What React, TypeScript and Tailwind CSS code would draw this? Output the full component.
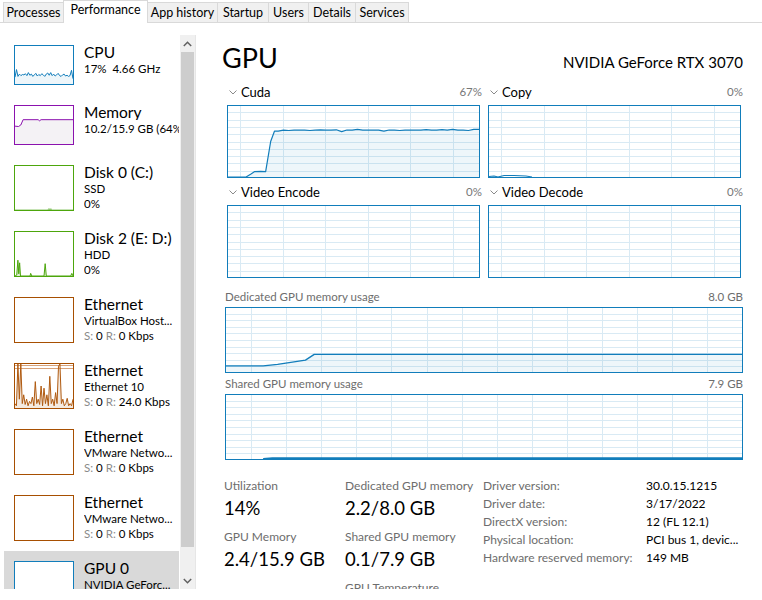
import React from "react";

type Pt = [number, number];

type GraphProps = {
  w: number;
  h: number;
  border: string;
  line?: string;
  fill?: string;
  grid?: string;
  gx?: number;
  gxOff?: number;
  gy?: number;
  pts?: Pt[];
  lw?: number;
  extras?: React.ReactNode;
};

function Graph({ w, h, border, line, fill, grid, gx, gxOff = 0, gy = 10, pts, lw = 1, extras }: GraphProps) {
  const X = (f: number) => 1 + f * (w - 2);
  const Y = (v: number) => h - 1 - v * (h - 2);
  const lines: React.ReactNode[] = [];
  if (grid) {
    for (let i = 1; i < gy; i++) {
      const y = Math.round((h * i) / gy) + 0.5;
      lines.push(<line key={"h" + i} x1={0} x2={w} y1={y} y2={y} stroke={grid} strokeWidth={1} />);
    }
    if (gx) {
      let k = 0;
      for (let x = gxOff; x < w - 1; x += gx) {
        const xx = Math.round(x) + 0.5;
        lines.push(<line key={"v" + k++} x1={xx} x2={xx} y1={0} y2={h} stroke={grid} strokeWidth={1} />);
      }
    }
  }
  const poly = pts ? pts.map(([f, v]) => `${X(f).toFixed(2)},${Y(v).toFixed(2)}`).join(" ") : "";
  const area = pts ? `${X(pts[0][0])},${h - 1} ${poly} ${X(pts[pts.length - 1][0])},${h - 1}` : "";
  return (
    <svg width={w} height={h} className="block shrink-0">
      <rect width={w} height={h} fill="#ffffff" />
      {lines}
      {pts && fill && <polygon points={area} fill={fill} />}
      {extras}
      {pts && line && (
        <polyline points={poly} fill="none" stroke={line} strokeWidth={lw} strokeLinejoin="round" />
      )}
      <rect x={0.5} y={0.5} width={w - 1} height={h - 1} fill="none" stroke={border} strokeWidth={1} />
    </svg>
  );
}

const series = (vals: number[], x0 = 0, x1 = 1): Pt[] =>
  vals.map((v, i) => [x0 + ((x1 - x0) * i) / (vals.length - 1), v] as Pt);

const BLUE = "#117dbb";
const GRID = "#d9eaf4";
const BFILL = "rgba(17,125,187,0.07)";

const cpuPts = series([
  0.18, 0.38, 0.2, 0.26, 0.22, 0.25, 0.24, 0.27, 0.22, 0.3, 0.23, 0.26, 0.2, 0.24, 0.28, 0.21, 0.25, 0.22, 0.27,
  0.24, 0.2, 0.26, 0.29, 0.23, 0.3, 0.22, 0.26, 0.21, 0.24, 0.28, 0.22, 0.2, 0.24, 0.26, 0.21, 0.23, 0.2, 0.22,
  0.36, 0.14,
]);

const memPts: Pt[] = [
  [0, 0.47],
  [0.06, 0.46],
  [0.1, 0.5],
  [0.14, 0.64],
  [0.4, 0.64],
  [0.42, 0.61],
  [0.45, 0.64],
  [1, 0.64],
];

const disk0Pts: Pt[] = [
  [0, 0],
  [0.57, 0],
  [0.58, 0.03],
  [0.59, 0],
  [0.6, 0.03],
  [0.61, 0],
  [0.62, 0.03],
  [0.63, 0],
  [1, 0],
];

const disk2Pts: Pt[] = [
  [0, 0],
  [0.03, 0.02],
  [0.05, 0.36],
  [0.065, 0.05],
  [0.08, 0.3],
  [0.095, 0],
  [0.26, 0],
  [0.27, 0.06],
  [0.29, 0],
  [0.5, 0],
  [0.52, 0.28],
  [0.54, 0],
  [0.96, 0],
  [0.98, 0.06],
  [1, 0],
];

const eth10Pts = series([
  0.1, 0.05, 1, 0.2, 1, 0.1, 0.3, 0.08, 0.2, 0.05, 0.15, 0.1, 0.25, 0.05, 0.6, 0.1, 0.2, 0.08, 0.5, 0.05, 0.45,
  0.1, 0.3, 0.05, 0.72, 0.1, 0.2, 0.05, 0.35, 0.1, 0.95, 1, 0.1, 0.2, 0.05, 0.1, 0.22, 0.05, 0.1, 0.05, 0.2,
]);

const cudaWiggle = [
  0.645, 0.66, 0.655, 0.66, 0.662, 0.66, 0.655, 0.66, 0.665, 0.66, 0.66, 0.665, 0.64, 0.662, 0.66, 0.672, 0.66,
  0.66, 0.662, 0.66, 0.645, 0.662, 0.66, 0.655, 0.66, 0.662, 0.66, 0.66, 0.667, 0.66, 0.66, 0.668, 0.66, 0.672,
  0.66, 0.66, 0.655, 0.672, 0.672,
];
const cudaPts: Pt[] = [
  [0, 0],
  [0.072, 0],
  [0.09, 0.04],
  [0.105, 0.075],
  [0.13, 0.078],
  [0.15, 0.075],
  [0.17, 0.5],
  [0.185, 0.645],
  ...series(cudaWiggle, 0.2, 1),
];

const copyExtras = (
  <polyline
    points="1,71.5 6,71 10,72 16,70.5 26,70.5 38,71 44,72"
    fill="none"
    stroke={BLUE}
    strokeWidth={1.2}
  />
);

const dedPts: Pt[] = [
  [0, 0.095],
  [0.072, 0.095],
  [0.1, 0.12],
  [0.154, 0.186],
  [0.171, 0.276],
  [1, 0.276],
];

const sharedPts: Pt[] = [
  [0.072, 0.0],
  [0.09, 0.012],
  [1, 0.012],
];

function Chevron() {
  return (
    <svg width="8" height="5" className="block shrink-0">
      <polyline points="0.5,0.5 4,4 7.5,0.5" fill="none" stroke="#8a8a8a" strokeWidth={1} />
    </svg>
  );
}

function SR({ s, r }: { s: string; r: string }) {
  return (
    <>
      <span className="text-[#8a8a8a]">S:</span> {s} <span className="text-[#8a8a8a]">R:</span> {r}
    </>
  );
}

type Item = {
  title: string;
  lines: React.ReactNode[];
  h: number;
  border: string;
  line?: string;
  fill?: string;
  pts?: Pt[];
  sel?: boolean;
  extras?: React.ReactNode;
};

const items: Item[] = [
  { title: "CPU", lines: ["17%\u00a0\u00a04.66 GHz"], h: 40, border: BLUE, line: BLUE, fill: BFILL, pts: cpuPts },
  {
    title: "Memory",
    lines: ["10.2/15.9 GB (64%)"],
    h: 40,
    border: "#8b12ae",
    line: "#8b12ae",
    fill: "#f4f2f5",
    pts: memPts,
  },
  { title: "Disk 0 (C:)", lines: ["SSD", "0%"], h: 46, border: "#4da60c", line: "#8cc66a", pts: disk0Pts },
  {
    title: "Disk 2 (E: D:)",
    lines: ["HDD", "0%"],
    h: 46,
    border: "#4da60c",
    line: "#4da60c",
    fill: "rgba(77,166,12,0.18)",
    pts: disk2Pts,
  },
  {
    title: "Ethernet",
    lines: ["VirtualBox Host...", <SR key="a" s="0" r="0 Kbps" />],
    h: 46,
    border: "#a74f01",
  },
  {
    title: "Ethernet",
    lines: ["Ethernet 10", <SR key="b" s="0" r="24.0 Kbps" />],
    h: 46,
    border: "#a74f01",
    line: "#b05a10",
    fill: "rgba(167,79,1,0.12)",
    pts: eth10Pts,
    extras: (
      <>
        <line x1={0} x2={60} y1={2.5} y2={2.5} stroke="#d9a37a" />
        <line x1={0} x2={60} y1={5.5} y2={5.5} stroke="#d9a37a" />
      </>
    ),
  },
  {
    title: "Ethernet",
    lines: ["VMware Netwo...", <SR key="c" s="0" r="0 Kbps" />],
    h: 46,
    border: "#a74f01",
  },
  {
    title: "Ethernet",
    lines: ["VMware Netwo...", <SR key="d" s="0" r="0 Kbps" />],
    h: 46,
    border: "#a74f01",
  },
  {
    title: "GPU 0",
    lines: ["NVIDIA GeForc...", "14%"],
    h: 46,
    border: BLUE,
    sel: true,
  },
];

const tabs: [string, number][] = [
  ["Processes", 60],
  ["Performance", 85],
  ["App history", 70],
  ["Startup", 51],
  ["Users", 40],
  ["Details", 47],
  ["Services", 54],
];

function SmallGraph({ label, pct, pts, extras }: { label: string; pct: string; pts?: Pt[]; extras?: React.ReactNode }) {
  return (
    <div className="flex flex-col">
      <div className="flex items-center h-[16px] pl-[2px] -mr-[2px]">
        <Chevron />
        <span className="ml-[4px] text-[13px] leading-[16px] text-black">{label}</span>
        <span className="ml-auto text-[11.5px] leading-[16px] text-[#777]">{pct}</span>
      </div>
      <div className="mt-[5px]">
        <Graph
          w={253}
          h={73}
          border={BLUE}
          line={BLUE}
          fill={BFILL}
          grid={GRID}
          gx={42.6}
          gxOff={13}
          pts={pts}
          lw={1.2}
          extras={extras}
        />
      </div>
    </div>
  );
}

export default function App() {
  return (
    <div className="w-[762px] h-[600px] bg-white overflow-hidden [font-family:Lato,'Noto_Sans',sans-serif] text-black">
      {/* Tabs */}
      <div className="h-[23px] flex items-end pl-[3px] border-b border-[#d9d9d9]">
        {tabs.map(([t, w], i) => {
          const active = t === "Performance";
          return (
            <div
              key={t}
              style={{ width: w }}
              className={
                active
                  ? "relative z-10 h-[23px] -mb-[1px] bg-white border-t border-l border-r border-[#d9d9d9] flex justify-center pt-[1px] text-[12.5px] leading-[15px] text-black"
                  : `h-[20px] bg-[#f0f0f0] border-t border-l border-[#d9d9d9] flex justify-center pt-[2px] text-[12.5px] leading-[15px] text-black ${
                      i === tabs.length - 1 ? "border-r" : ""
                    } ${i === 2 ? "-ml-[1px]" : ""}`
              }
            >
              {t}
            </div>
          );
        })}
      </div>

      <div className="flex h-[566px]">
        {/* Sidebar */}
        <div className="w-[180px] pt-[12px] overflow-hidden shrink-0">
          {items.map((it, i) => (
            <div
              key={i}
              className={`ml-[4px] w-[175px] flex pl-[10px] py-[10px] gap-[10px] ${it.sel ? "bg-[#d9d9d9]" : ""}`}
            >
              <Graph w={60} h={it.h} border={it.border} line={it.line} fill={it.fill} pts={it.pts} extras={it.extras} />
              <div className="min-w-0 flex-1 flex flex-col">
                <div className="text-[15.5px] leading-[16px] -mt-[1px] mb-[1px] whitespace-nowrap overflow-hidden">
                  {it.title}
                </div>
                {it.lines.map((l, j) => (
                  <div key={j} className="text-[11.5px] leading-[15px] whitespace-nowrap overflow-hidden">
                    {l}
                  </div>
                ))}
              </div>
            </div>
          ))}
        </div>

        {/* Scrollbar */}
        <div className="w-[17px] shrink-0 pt-[12px] flex flex-col">
          <div className="w-[16px] flex-1 bg-[#f0f0f0] border-r border-[#e6e6e6] flex flex-col items-center">
            <div className="h-[17px] flex items-center justify-center w-full">
              <svg width="9" height="6">
                <polyline points="0.8,5 4.5,1.3 8.2,5" fill="none" stroke="#606060" strokeWidth={1.5} />
              </svg>
            </div>
            <div className="w-[13px] h-[495px] bg-[#cdcdcd]" />
            <div className="flex-1" />
            <div className="h-[17px] flex items-center justify-center w-full">
              <svg width="9" height="6">
                <polyline points="0.8,1 4.5,4.7 8.2,1" fill="none" stroke="#606060" strokeWidth={1.5} />
              </svg>
            </div>
          </div>
        </div>

        {/* Main */}
        <div className="flex-1 pl-[28px] pr-[19px] overflow-hidden">
          <div className="mt-[20px] h-[30px] flex items-baseline justify-between">
            <div className="text-[27px] leading-[30px] -ml-[3px]">GPU</div>
            <div className="text-[15px] leading-[30px]">NVIDIA GeForce RTX 3070</div>
          </div>

          <div className="mt-[11px] ml-[2px] grid grid-cols-[253px_253px] gap-x-[8px] gap-y-[6px]">
            <SmallGraph label="Cuda" pct="67%" pts={cudaPts} />
            <SmallGraph label="Copy" pct="0%" extras={copyExtras} />
            <SmallGraph label="Video Encode" pct="0%" />
            <SmallGraph label="Video Decode" pct="0%" />
          </div>

          <div className="mt-[12px] flex justify-between text-[11.5px] leading-[14px] text-[#6d6d6d]">
            <span>Dedicated GPU memory usage</span>
            <span>8.0 GB</span>
          </div>
          <div className="mt-[3px]">
            <Graph w={518} h={66} border={BLUE} line={BLUE} fill={BFILL} grid={GRID} gx={35.1} gxOff={26} pts={dedPts} lw={1.3} />
          </div>
          <div className="mt-[4px] flex justify-between text-[11.5px] leading-[14px] text-[#6d6d6d]">
            <span>Shared GPU memory usage</span>
            <span>7.9 GB</span>
          </div>
          <div className="mt-[3px]">
            <Graph w={518} h={66} border={BLUE} line={BLUE} fill={BFILL} grid={GRID} gx={35.1} gxOff={26} pts={sharedPts} lw={2} />
          </div>

          <div className="mt-[15px] flex items-start -ml-[1px]">
            <div className="w-[121px] pt-[3px] flex flex-col">
              <div className="text-[12px] leading-[15px] text-[#6d6d6d]">Utilization</div>
              <div className="mt-[4px] text-[18.5px] leading-[22px]">14%</div>
              <div className="mt-[10px] text-[12px] leading-[15px] text-[#6d6d6d]">GPU Memory</div>
              <div className="mt-[4px] text-[18.5px] leading-[22px] whitespace-nowrap">2.4/15.9 GB</div>
            </div>
            <div className="w-[138px] pt-[3px] flex flex-col">
              <div className="text-[12px] leading-[15px] text-[#6d6d6d]">Dedicated GPU memory</div>
              <div className="mt-[4px] text-[18.5px] leading-[22px]">2.2/8.0 GB</div>
              <div className="mt-[10px] text-[12px] leading-[15px] text-[#6d6d6d]">Shared GPU memory</div>
              <div className="mt-[4px] text-[18.5px] leading-[22px]">0.1/7.9 GB</div>
              <div className="mt-[10px] text-[12px] leading-[15px] text-[#6d6d6d]">GPU Temperature</div>
            </div>
            <div className="flex-1 pt-[2px] grid grid-cols-[163px_1fr] content-start text-[12px] leading-[18px]">
              <div className="text-[#6d6d6d]">Driver version:</div>
              <div>30.0.15.1215</div>
              <div className="text-[#6d6d6d]">Driver date:</div>
              <div>3/17/2022</div>
              <div className="text-[#6d6d6d]">DirectX version:</div>
              <div>12 (FL 12.1)</div>
              <div className="text-[#6d6d6d]">Physical location:</div>
              <div>PCI bus 1, devic...</div>
              <div className="text-[#6d6d6d] whitespace-nowrap">Hardware reserved memory:</div>
              <div>149 MB</div>
            </div>
          </div>
        </div>
      </div>
    </div>
  );
}
